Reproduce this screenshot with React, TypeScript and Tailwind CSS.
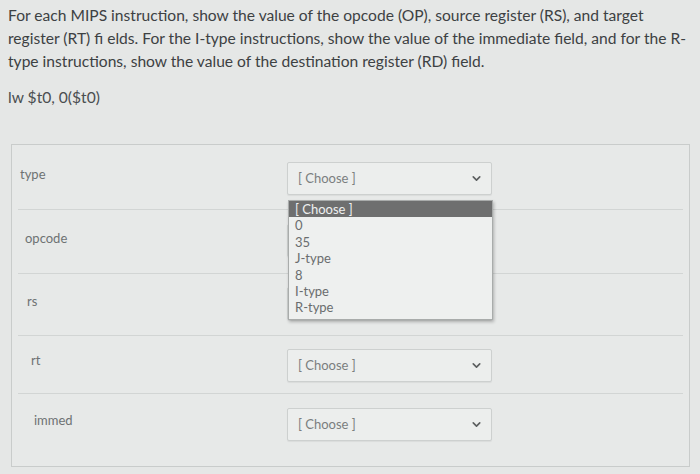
import { ChevronDown } from "lucide-react";

const rows = [
  { label: "type", pad: "pt-[20px]", selTop: "mt-[17px]", h: "h-[64px]", labelPl: "pl-[8px]" },
  { label: "opcode", pad: "pt-[19px]", selTop: "mt-[14px]", h: "h-[64px]", labelPl: "pl-[13px]" },
  { label: "rs", pad: "pt-[18px]", selTop: "mt-[13px]", h: "h-[62px]", labelPl: "pl-[15px]" },
  { label: "rt", pad: "pt-[15px]", selTop: "mt-[13px]", h: "h-[58px]", labelPl: "pl-[19px]" },
  { label: "immed", pad: "pt-[17px]", selTop: "mt-[14px]", h: "h-[73px]", labelPl: "pl-[22px]" },
];

const options = ["0", "35", "J-type", "8", "I-type", "R-type"];

function Select() {
  return (
    <div className="flex h-[33px] w-[205px] items-center justify-between rounded-[2px] border border-[#cdd0cf] bg-[#eceeed] pl-[10px] pr-[8px] text-[13px] text-[#7b7e7f] shadow-[0_1px_1px_rgba(0,0,0,0.06)]">
      <span>[ Choose ]</span>
      <ChevronDown className="h-[13px] w-[13px] text-[#5c5f60]" strokeWidth={3} />
    </div>
  );
}

export default function App() {
  return (
    <div className="min-h-[474px] w-[700px] bg-[#e5e7e6] font-['Lato',sans-serif] text-[#3d4143]">
      <div className="px-[8px] pt-[4px] text-[15.6px] leading-[23px]">
        <p>
          For each MIPS instruction, show the value of the opcode (OP), source register (RS), and target
          register (RT) ﬁ elds. For the I-type instructions, show the value of the immediate ﬁeld, and for the R-
          type instructions, show the value of the destination register (RD) ﬁeld.
        </p>
        <p className="mt-[13px] text-[#4a4e50]">lw $t0, 0($t0)</p>
      </div>

      <div className="relative ml-[11px] mt-[35px] w-[679px] border border-[#c9cccb] bg-[#e7e9e8]">
        {rows.map((r, i) => (
          <div key={r.label} className={`${r.h} ${i > 0 ? "mx-[6px] border-t border-[#d2d5d4]" : ""}`}>
            <div className={`flex ${i > 0 ? "-mx-[6px]" : ""}`}>
              <div className={`w-[275px] ${r.labelPl} ${r.pad} text-[13px] text-[#6e7273]`}>{r.label}</div>
              <div className={r.selTop}>
                <Select />
              </div>
            </div>
          </div>
        ))}

        <div className="absolute left-[276px] top-[55px] w-[205px] border border-[#a9acab] bg-[#eef0ef] pb-[3px] text-[13px] leading-[16.4px] text-[#6a6d6e] shadow-[1px_2px_3px_rgba(0,0,0,0.25)]">
          <div className="bg-[#6e6f6f] px-[6px] text-[#eef0ef]">[ Choose ]</div>
          {options.map((o) => (
            <div key={o} className="px-[6px]">{o}</div>
          ))}
        </div>
      </div>
    </div>
  );
}
